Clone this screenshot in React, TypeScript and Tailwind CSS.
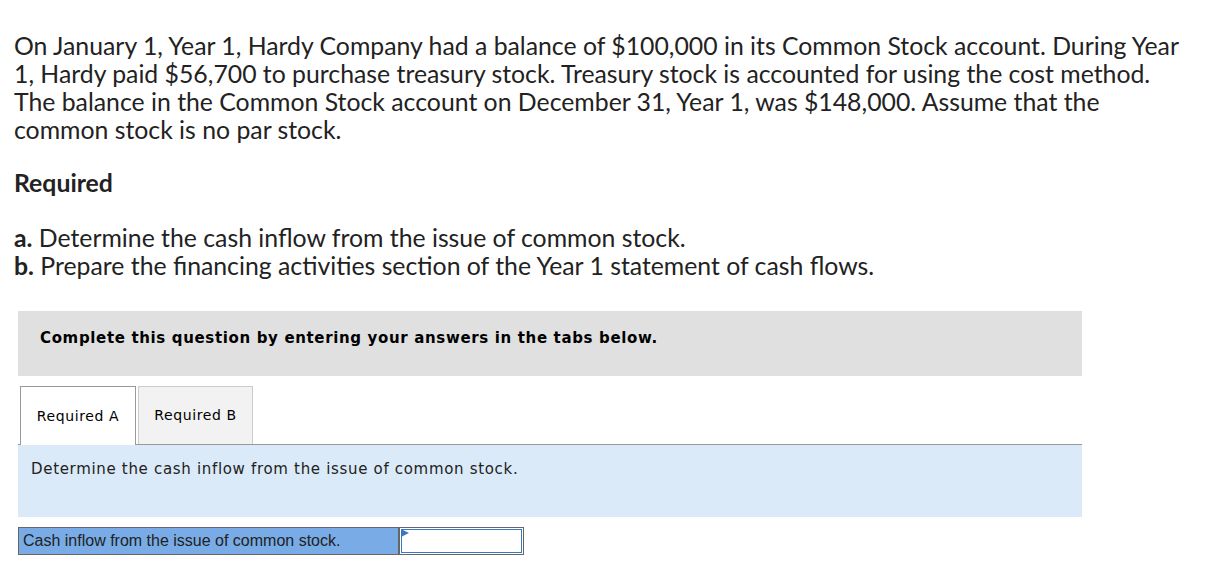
import React from "react";

export default function App() {
  return (
    <div className="w-[1207px] h-[565px] bg-white overflow-hidden text-[#222]">
      <div className="pl-[14px] pr-[4px] pt-[32px] font-['Lato',sans-serif] text-[24.8px] leading-[28px] whitespace-nowrap">
        <p>
          On January 1, Year 1, Hardy Company had a balance of $100,000 in its Common Stock account. During Year
          <br />
          1, Hardy paid $56,700 to purchase treasury stock. Treasury stock is accounted for using the cost method.
          <br />
          The balance in the Common Stock account on December 31, Year 1, was $148,000. Assume that the
          <br />
          common stock is no par stock.
        </p>
        <p className="mt-[25px] font-bold">Required</p>
        <div className="mt-[27px]">
          <p>
            <span className="font-bold">a.</span> Determine the cash inflow from the issue of common stock.
          </p>
          <p>
            <span className="font-bold">b.</span> Prepare the financing activities section of the Year 1 statement of cash flows.
          </p>
        </div>
      </div>
      <div className="ml-[18px] w-[1064px] mt-[31px]">
        <div className="h-[65px] bg-[#e0e0e0] pl-[22px] pt-[18px] font-['DejaVu_Sans',sans-serif] font-bold text-[15px] leading-[18px] tracking-[0.65px] text-black">
          Complete this question by entering your answers in the tabs below.
        </div>
        <div className="mt-[10px] flex items-end border-b border-[#999] h-[59px] pl-[2px] gap-[2px] font-['DejaVu_Sans',sans-serif] text-[14px] tracking-[0.6px] text-black">
          <div className="w-[116px] h-[59px] -mb-[1px] bg-white border border-[#999] border-b-0 flex items-center justify-center">
            Required A
          </div>
          <div className="w-[115px] h-[58px] bg-[#f2f2f2] border border-[#ccc] border-b-0 flex items-center justify-center">
            Required B
          </div>
        </div>
        <div className="h-[72px] bg-[#daeaf8] pl-[13px] pt-[13px] font-['DejaVu_Sans',sans-serif] text-[15px] tracking-[0.68px] text-[#222]">
          Determine the cash inflow from the issue of common stock.
        </div>
        <div className="mt-[10px] flex h-[28px] font-['Liberation_Sans',sans-serif] text-[16px] text-[#222]">
          <div className="w-[381px] bg-[#79ace6] border border-[#666] flex items-center pl-[4px]">
            Cash inflow from the issue of common stock.
          </div>
          <div className="relative w-[125px] border border-[#666] p-[1px] bg-white">
            <div className="w-full h-full border border-[#3b78c2]"></div>
            <svg className="absolute left-[1px] top-[1px]" width="8" height="10" viewBox="0 0 8 10">
              <polygon points="0,0 8,4 0,8" fill="#3b78c2" />
            </svg>
          </div>
        </div>
      </div>
    </div>
  );
}
